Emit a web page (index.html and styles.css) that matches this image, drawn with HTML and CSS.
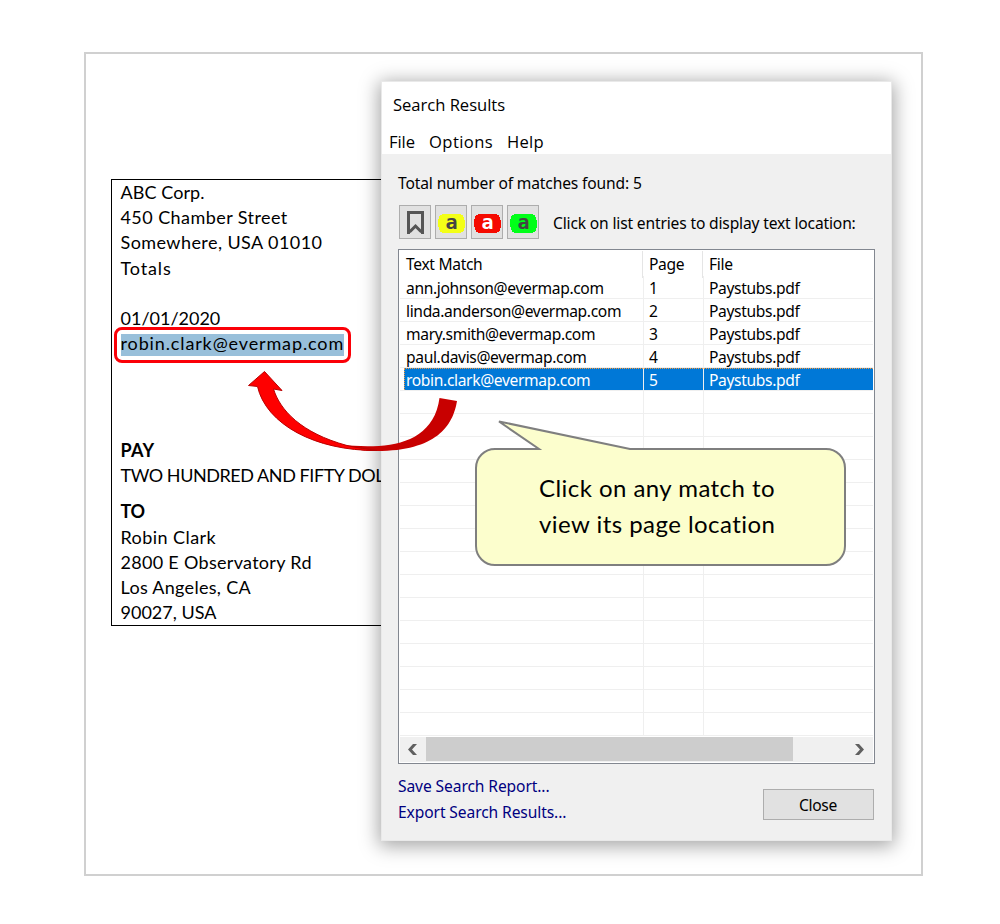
FILE: index.html
```
<!DOCTYPE html>
<html lang="en">
<head>
<meta charset="utf-8">
<title>Search Results</title>
<link rel="stylesheet" href="styles.css">
</head>
<body>
<main class="frame">
  <section class="document">
    <p class="snug">ABC Corp.</p>
    <p class="wide">450 Chamber Street</p>
    <p class="wide">Somewhere, USA 01010</p>
    <p class="wider">Totals</p>
    <p>&nbsp;</p>
    <p>01/01/2020</p>
    <p class="wider match"><mark>robin.clark@evermap.com</mark></p>
    <h2 class="pay">PAY</h2>
    <p class="caps">TWO HUNDRED AND FIFTY DOL</p>
    <h2 class="to">TO</h2>
    <p class="wide">Robin Clark</p>
    <p class="medium">2800 E Observatory Rd</p>
    <p class="medium">Los Angeles, CA</p>
    <p>90027, USA</p>
  </section>

  <section class="window">
    <header class="titlebar">
      <h1>Search Results</h1>
      <nav class="menu"><span class="m-file">File</span><span class="m-options">Options</span><span class="m-help">Help</span></nav>
    </header>
    <div class="content">
      <p class="total">Total number of matches found: 5</p>
      <div class="toolbar">
        <button class="tool"><svg width="30" height="32" viewBox="0 0 30 32"><path d="M8.500 28V6.500h14V28M8 26.500l2.500-1.500 5-5 5 5L23 26.500" fill="none" stroke="#555" stroke-width="3"/></svg></button>
        <button class="tool"><svg width="30" height="32" viewBox="0 0 30 32"><path class="pill yellow" d="M6 8H25V9H27V11H28V14H29V22H28V25H27V26H25V27H6V26H4V24H3V21H2V13H3V10H4V9H6Z"/><text x="15.500" y="23" class="glyph">a</text></svg></button>
        <button class="tool"><svg width="30" height="32" viewBox="0 0 30 32"><path class="pill red" d="M6 8H25V9H27V11H28V14H29V22H28V25H27V26H25V27H6V26H4V24H3V21H2V13H3V10H4V9H6Z"/><text x="15.500" y="23" class="glyph light">a</text></svg></button>
        <button class="tool"><svg width="30" height="32" viewBox="0 0 30 32"><path class="pill green" d="M6 8H25V9H27V11H28V14H29V22H28V25H27V26H25V27H6V26H4V24H3V21H2V13H3V10H4V9H6Z"/><text x="15.500" y="23" class="glyph">a</text></svg></button>
        <span class="hint">Click on list entries to display text location:</span>
      </div>
      <div class="list">
        <div class="head"><span>Text Match</span><span>Page</span><span>File</span></div>
        <div class="row"><span>ann.johnson@evermap.com</span><span>1</span><span>Paystubs.pdf</span></div>
        <div class="row"><span>linda.anderson@evermap.com</span><span>2</span><span>Paystubs.pdf</span></div>
        <div class="row"><span>mary.smith@evermap.com</span><span>3</span><span>Paystubs.pdf</span></div>
        <div class="row"><span>paul.davis@evermap.com</span><span>4</span><span>Paystubs.pdf</span></div>
        <div class="row selected"><span>robin.clark@evermap.com</span><span>5</span><span>Paystubs.pdf</span></div>
        <div class="row"><span></span><span></span><span></span></div>
        <div class="row"><span></span><span></span><span></span></div>
        <div class="row"><span></span><span></span><span></span></div>
        <div class="row"><span></span><span></span><span></span></div>
        <div class="row"><span></span><span></span><span></span></div>
        <div class="row"><span></span><span></span><span></span></div>
        <div class="row"><span></span><span></span><span></span></div>
        <div class="row"><span></span><span></span><span></span></div>
        <div class="row"><span></span><span></span><span></span></div>
        <div class="row"><span></span><span></span><span></span></div>
        <div class="row"><span></span><span></span><span></span></div>
        <div class="row"><span></span><span></span><span></span></div>
        <div class="row"><span></span><span></span><span></span></div>
        <div class="row"><span></span><span></span><span></span></div>
        <div class="row"><span></span><span></span><span></span></div>
        <div class="scrollbar">
          <svg width="26" height="24" viewBox="0 0 26 24"><path d="M13 7h4l-5 5.500 5 5.500h-4l-5-5.500z" fill="#606060"/></svg>
          <div class="thumb"></div>
          <svg width="26" height="24" viewBox="0 0 26 24"><path d="M12 7H8l5 5.500-5 5.500h4l5-5.500z" fill="#606060"/></svg>
        </div>
      </div>
      <footer class="footer">
        <div class="links"><a>Save Search Report...</a><a>Export Search Results...</a></div>
        <button class="close">Close</button>
      </footer>
    </div>
  </section>

  <svg class="arrow" width="215" height="86" viewBox="245 368 215 86">
    <path d="M439.500 398L457 401C453 426 436 451 377 451C362 451 352 449 343 445C352 446 364 446.500 379 446C409 444 435 432 439.500 398Z" fill="#c80000"/>
    <path d="M264.500 371.500L282 390.500L273.500 389C280 410 301 433 347 445.500C358 448 367 449 377 450.500C315 451 266 424 257.500 386.500L248.500 385.500Z" fill="#fe0000" stroke="#b80000" stroke-width="1" stroke-linejoin="miter"/>
  </svg>
  <div class="callout">
    <svg width="374" height="148" viewBox="474 420 374 148"><path d="M496 449H539L499 421.500L630 449H826A19 19 0 0 1 845 468V546A19 19 0 0 1 826 565H495A19 19 0 0 1 476 546V468A19 19 0 0 1 495 449Z" fill="#fcfecd" stroke="#7f7f7f" stroke-width="2"/></svg>
    <p>Click on any match to<br>view its page location</p>
  </div>
</main>
</body>
</html>
```
FILE: styles.css
```
* { box-sizing: border-box; }
body { margin: 0; background: #fff; color: #000; }
h1, h2, p { margin: 0; font-weight: normal; }
svg { display: block; }

.frame {
  position: relative;
  display: flex;
  align-items: flex-start;
  width: 839px;
  height: 824px;
  margin: 52px 0 0 84px;
  padding: 27px 0 0 25px;
  border: 2px solid #d0d0d0;
}

/* page being searched */
.document {
  width: 271px;
  height: 447px;
  margin-top: 98px;
  padding-left: 8.5px;
  border: 1px solid #000;
  border-right: 0;
  font: 18px/25.2px Lato, Carlito, sans-serif;
  white-space: nowrap;
}
.document h2 { font: bold 18px/25.2px Lato, Carlito, sans-serif; }
.document .snug { letter-spacing: 0.07px; }
.document .medium { letter-spacing: 0.3px; }
.document .wide { letter-spacing: 0.43px; }
.document .wider { letter-spacing: 0.87px; }
.document .caps { letter-spacing: -0.44px; }
.document .pay { margin-top: 81.6px; line-height: 25px; letter-spacing: 0.32px; }
.document .to { margin-top: 11.2px; letter-spacing: -0.46px; }
.match mark {
  position: relative;
  display: inline-block;
  height: 22px;
  margin-top: 3px;
  line-height: 19px;
  background: #98bfda;
  color: #000;
  vertical-align: top;
}
.match mark::after {
  content: "";
  position: absolute;
  inset: -7px;
  border: 3px solid #fb0007;
  border-radius: 8px;
}

/* results window */
.window {
  width: 511px;
  height: 760px;
  margin-left: -1px;
  border: 1px solid #e9e9e9;
  background: #f0f0f0;
  box-shadow: 0 3px 18px 2px rgba(0, 0, 0, 0.36);
  font: 15.6px/23px "Noto Sans", "Open Sans", sans-serif;
  letter-spacing: -0.32px;
}
.titlebar {
  height: 72px;
  padding: 8px 0 0 7px;
  background: #fff;
  font: 16.6px/24px "Open Sans", "Noto Sans", sans-serif;
}
.titlebar h1 { padding-left: 4px; font-size: 16.6px; line-height: 30px; letter-spacing: -0.03px; }
.menu { display: grid; grid-template-columns: 40px 78px 60px; margin-top: 10px; }
.m-file { letter-spacing: -0.1px; }
.m-options { letter-spacing: 0.42px; }
.m-help { letter-spacing: 0.25px; }

.content { padding: 17px 16px 0; }
.total { letter-spacing: -0.14px; line-height: 24px; }
.toolbar { display: flex; gap: 4px; height: 34px; margin: 10px 0 10px 1px; }
.tool { width: 32px; height: 34px; padding: 0; border: 1px solid #adadad; background: #e1e1e1; }
.pill { shape-rendering: crispEdges; }
.yellow { fill: #f3ff17; }
.red { fill: #f50a00; }
.green { fill: #00ff18; }
.glyph { font: bold 20px "DejaVu Sans Mono", monospace; text-anchor: middle; fill: #444; }
.light { fill: #fff; }
.hint { margin-left: 10px; line-height: 36px; letter-spacing: -0.16px; white-space: nowrap; }

.list {
  width: 477px;
  height: 515px;
  padding: 1px;
  border: 1px solid #828790;
  background: #fff;
}
.head, .row { display: grid; grid-template-columns: 243px 60px 1fr; }
.head { height: 25px; line-height: 27px; }
.head span { padding-left: 6px; }
.head span + span { padding-left: 6px; border-left: 1px solid #e5e5e5; margin-left: -1px; }
.row { height: 23px; border-bottom: 1px solid #efefef; line-height: 25px; letter-spacing: -0.35px; }
.row span { height: 22px; padding-left: 6px; white-space: nowrap; }
.row span + span { padding-left: 5px; border-left: 1px solid #efefef; }
.selected { color: #fff; }
.selected span { background: #0078d7; border-top: 1px dotted #f59a3d; line-height: 23px; }
.selected span:first-child { margin-left: 4px; padding-left: 1px; border-left: 1px dotted #f59a3d; }
.scrollbar { display: flex; height: 25px; margin-top: 1px; background: #f0f0f0; }
.thumb { width: 367px; height: 24px; margin-right: auto; background: #cdcdcd; }

.footer { display: flex; justify-content: space-between; align-items: flex-start; padding: 10px 1px 0 0; }
.links { display: grid; grid-auto-rows: 26px; color: #000080; letter-spacing: -0.1px; }
.links a { line-height: 25px; }
.close {
  width: 111px;
  height: 31px;
  margin-top: 15px;
  padding: 1px 1px 0 0;
  border: 1px solid #adadad;
  background: #e1e1e1;
  font: inherit;
  letter-spacing: -0.3px;
}

/* annotations laid over the window */
.arrow { position: absolute; left: 159px; top: 314px; }
.callout { position: absolute; left: 388px; top: 366px; }
.callout p {
  position: absolute;
  left: 65px;
  top: 50px;
  font: 24px/36px Lato, Carlito, sans-serif;
  letter-spacing: 0.45px;
  white-space: nowrap;
}
```
